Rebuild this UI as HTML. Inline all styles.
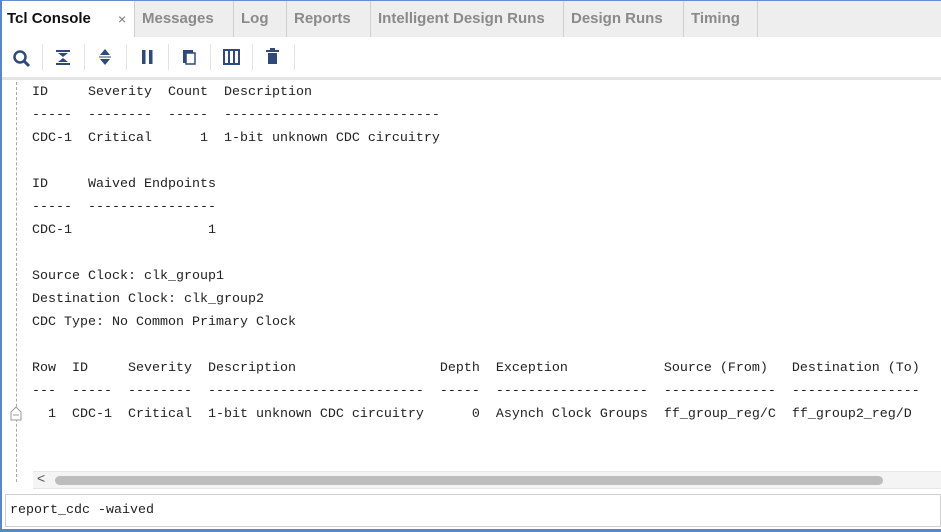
<!DOCTYPE html>
<html><head><style>
*{margin:0;padding:0;box-sizing:border-box}
body{width:941px;height:532px;overflow:hidden;background:#fff;position:relative;font-family:"Liberation Sans",sans-serif}
.lb{position:absolute;left:0;top:0;width:2px;height:532px;background:#5b86c5}
.bb{position:absolute;left:0;bottom:0;width:941px;height:3px;background:#5b86c5}
.tb{position:absolute;left:0;top:0;width:941px;height:37px;background:#eeeeee;border-top:1px solid #6b8ccc}
.tab{position:absolute;top:0;height:36px;line-height:35px;font-size:15px;font-weight:bold;color:#8a8a8a;padding-left:7px;border-right:1px solid #cfcfcf}
.act{background:#fff;color:#111;height:37px}
.tool{position:absolute;top:37px;left:0;width:941px;height:40px;background:#fff}
.sep{position:absolute;top:44px;width:1px;height:26px;background:#e2e2e2}
.gl{position:absolute;top:77px;left:0;width:941px;height:3px;background:#e4e4e4}
pre{position:absolute;left:32px;top:81px;font-family:"Liberation Mono",monospace;font-size:13.33px;line-height:23px;color:#222}
.gut{position:absolute;left:16px;top:82px;height:400px;border-left:1px dashed #aaa}
.sb{position:absolute;left:33px;top:471px;width:908px;height:18px;background:#f4f4f4;border-top:1px solid #e6e6e6;border-bottom:1px solid #e6e6e6}
.th{position:absolute;left:22px;top:4px;width:828px;height:9px;border-radius:5px;background:#bdbdbd}
.inp{position:absolute;left:5px;top:494px;width:936px;height:33px;border:1px solid #cfcfcf;background:#fff;font-family:"Liberation Mono",monospace;font-size:13.33px;line-height:31px;padding-left:4px;color:#222}
</style></head><body>
<div class="tb">
<div class="tab act" style="left:0;width:135px">Tcl Console<span style="position:absolute;left:118px;top:1px;font-weight:normal;color:#777;font-size:14px">×</span></div>
<div class="tab" style="left:135px;width:99px">Messages</div>
<div class="tab" style="left:234px;width:53px">Log</div>
<div class="tab" style="left:287px;width:84px">Reports</div>
<div class="tab" style="left:371px;width:193px">Intelligent Design Runs</div>
<div class="tab" style="left:564px;width:120px">Design Runs</div>
<div class="tab" style="left:684px;width:74px">Timing</div>
</div>
<div class="tool">
<svg width="941" height="40" style="position:absolute;left:0;top:0">
<g fill="#2f4a7a" stroke="#2f4a7a">
<circle cx="20" cy="20" r="5.5" fill="none" stroke-width="2.5"/><line x1="24" y1="24" x2="29" y2="29" stroke-width="3"/>
<path d="M56 14h14M56 27h14" stroke-width="2"/><path d="M58 16h10l-5 4zM58 25h10l-5-4z" stroke="none"/>
<path d="M100 18l5-6 5 6zM100 22l5 6 5-6z" stroke="none"/><line x1="99" y1="20" x2="111" y2="20" stroke-width="1"/>
<rect x="142" y="13" width="3.5" height="14" stroke="none"/><rect x="149" y="13" width="3.5" height="14" stroke="none"/>
<rect x="183" y="13" width="10" height="13" stroke="none"/><rect x="186" y="16" width="9" height="11" fill="#fff" stroke-width="1.5"/>
<rect x="224" y="13" width="15" height="14" fill="none" stroke-width="2"/><path d="M229 13v14M234 13v14" stroke-width="2"/>
<rect x="266" y="13" width="13" height="2" stroke="none"/><rect x="270" y="11" width="5" height="2" stroke="none"/><rect x="268" y="16" width="9" height="11" stroke="none"/>
</g></svg>
<div class="sep" style="left:42px;top:7px"></div><div class="sep" style="left:84px;top:7px"></div><div class="sep" style="left:126px;top:7px"></div><div class="sep" style="left:168px;top:7px"></div><div class="sep" style="left:210px;top:7px"></div><div class="sep" style="left:252px;top:7px"></div><div class="sep" style="left:294px;top:7px"></div>
</div>
<div class="gl"></div>
<div class="gut"></div>
<svg style="position:absolute;left:9px;top:406px" width="14" height="16"><path d="M7 1l5 5v8H2V6z" fill="#fff" stroke="#999"/><line x1="4" y1="9" x2="10" y2="9" stroke="#999"/></svg>
<pre>ID     Severity  Count  Description
-----  --------  -----  ---------------------------
CDC-1  Critical      1  1-bit unknown CDC circuitry

ID     Waived Endpoints
-----  ----------------
CDC-1                 1

Source Clock: clk_group1
Destination Clock: clk_group2
CDC Type: No Common Primary Clock

Row  ID     Severity  Description                  Depth  Exception            Source (From)   Destination (To)
---  -----  --------  ---------------------------  -----  -------------------  --------------  ----------------
  1  CDC-1  Critical  1-bit unknown CDC circuitry      0  Asynch Clock Groups  ff_group_reg/C  ff_group2_reg/D</pre>
<div class="sb"><span style="position:absolute;left:4px;top:-2px;font-size:14px;color:#555">&lt;</span><div class="th"></div></div>
<div class="inp">report_cdc -waived</div>
<div class="lb"></div><div class="bb"></div>
</body></html>
